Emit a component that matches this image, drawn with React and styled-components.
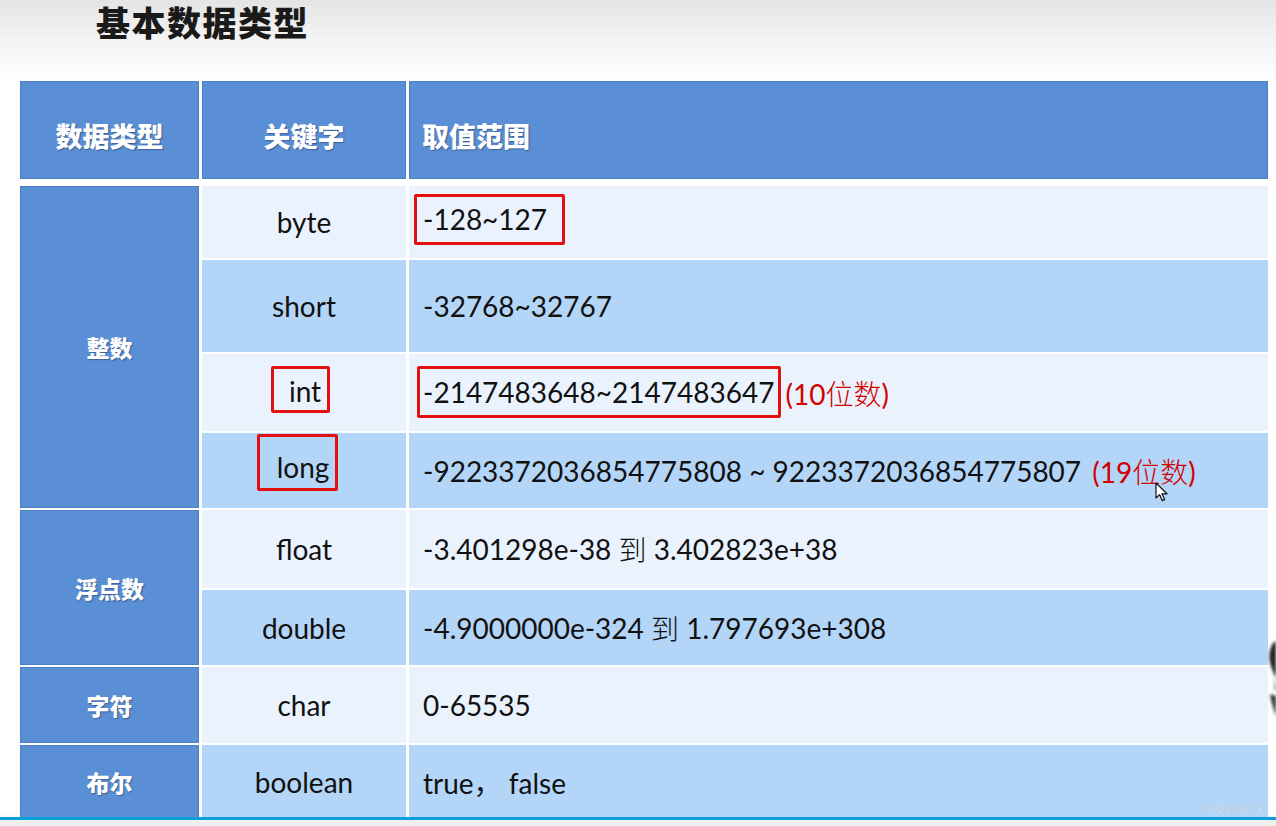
import React from "react";
import styled, { createGlobalStyle } from "styled-components";

const GlobalStyle = createGlobalStyle`
  html, body {
    margin: 0;
    padding: 0;
    background: #ffffff;
    overflow: hidden;
  }
  #root {
    width: 1276px;
    height: 826px;
  }
`;

const latin = `Lato, "Noto Sans CJK SC", sans-serif`;
const cjk = `"Noto Sans CJK SC", "Noto Sans", sans-serif`;

const LIGHT = "#eaf3fd";
const DARK = "#b3d5f8";
const BLUE = "#5a8ed5";

// rows are built inside the component so the styled parts below already exist
const buildRows = () => [
  {
    group: "整数",
    span: 4,
    key: "byte",
    h: 72,
    range: (
      <RedBox $pad="0 15px 0 6px" $h={51} $shift="-6px 0 0 -9px">
        -128~127
      </RedBox>
    ),
  },
  { key: "short", h: 92, range: "-32768~32767" },
  {
    key: "int",
    h: 77,
    keyBox: { pad: "2px 6px 0 15px", h: 47, shift: "-6px 0 0 -7px" },
    range: (
      <>
        <RedBox $pad="0 4px 0 3px" $h={52} $shift="-2px 0 0 -6px">
          -2147483648~2147483647
        </RedBox>
        <Note>(10<Han>位数</Han>)</Note>
      </>
    ),
  },
  {
    key: "long",
    h: 75,
    keyBox: { pad: "8px 6px 0 17px", h: 57, shift: "-16px 0 0 -13px" },
    range: (
      <>
        -9223372036854775808 ~ 9223372036854775807 <Note>(19<Han>位数</Han>)</Note>
      </>
    ),
  },
  { group: "浮点数", span: 2, key: "float", h: 78, range: <>-3.401298e-38 <Han>到</Han> 3.402823e+38</> },
  { key: "double", h: 75, range: <>-4.9000000e-324 <Han>到</Han> 1.797693e+308</> },
  { group: "字符", span: 1, key: "char", h: 76, range: "0-65535" },
  { group: "布尔", span: 1, key: "boolean", h: 74, range: "true， false" },
];

const App = () => {
  const rows = buildRows();
  let line = 1;
  const cells = [];
  rows.forEach((r, i) => {
    const tone = i % 2 === 0 ? LIGHT : DARK;
    if (r.group) {
      cells.push(
        <GroupCell key={r.key + "-g"} style={{ gridRow: `${line} / span ${r.span}` }}>
          {r.group}
        </GroupCell>
      );
    }
    const kb = r.keyBox;
    cells.push(
      <KeyCell key={r.key + "-k"} $bg={tone} style={{ gridRow: line }}>
        {kb ? (
          <RedBox $pad={kb.pad} $h={kb.h} $shift={kb.shift}>
            {r.key}
          </RedBox>
        ) : (
          r.key
        )}
      </KeyCell>
    );
    cells.push(
      <RangeCell key={r.key + "-r"} $bg={tone} style={{ gridRow: line }}>
        {r.range}
      </RangeCell>
    );
    line += 1;
  });

  return (
    <>
      <GlobalStyle />
      <Page>
        <TitleBar>
          <Title>基本数据类型</Title>
        </TitleBar>
        <Table>
          <HeadRow>
            <HeadCell $center>数据类型</HeadCell>
            <HeadCell $center>关键字</HeadCell>
            <HeadCell>取值范围</HeadCell>
          </HeadRow>
          <Body $rows={rows.map((r) => r.h + "px").join(" ")}>{cells}</Body>
        </Table>
        <Progress />
        <Watermark>CSDN @20_X</Watermark>
        <Cursor width="16" height="22" viewBox="0 0 16 22">
          <path d="M1 1 L1 16 L4.6 12.6 L7.2 18.6 L9.6 17.6 L7 11.8 L12 11.8 Z" fill="#fff" stroke="#111" strokeWidth="1.2" strokeLinejoin="round" />
        </Cursor>
        <EdgeBlob width="10" height="100" viewBox="0 0 10 100">
          <defs>
            <filter id="blur">
              <feGaussianBlur stdDeviation="1.6" />
            </filter>
          </defs>
          <g filter="url(#blur)">
            <path d="M8 6 C3 12 2 22 5 30 C7 36 9 40 10 42 L10 6 Z" fill="#222" />
            <path d="M4 58 C5 66 8 74 10 80 L10 60 Z" fill="#333" />
            <path d="M9 40 L10 56 L8 52 Z" fill="#777" />
          </g>
        </EdgeBlob>
      </Page>
    </>
  );
};

const Page = styled.div`
  position: relative;
  width: 1276px;
  height: 826px;
  background: linear-gradient(#ffffff 0, #ffffff 812px, #f0f0f0 822px);
  overflow: hidden;
`;

const TitleBar = styled.div`
  height: 81px;
  padding-left: 96px;
  box-sizing: border-box;
  background: linear-gradient(#e4e4e4 0%, #f4f4f4 50%, #ffffff 100%);
`;

const Title = styled.h1`
  margin: 0;
  font-family: ${cjk};
  font-weight: 900;
  font-size: 34px;
  line-height: 44px;
  letter-spacing: 1.5px;
  color: #1a1a1a;
`;

const Table = styled.div`
  margin: 0 8px 0 20px;
  width: 1248px;
`;

const HeadRow = styled.div`
  display: grid;
  grid-template-columns: 179px 204px 1fr;
  column-gap: 3px;
  height: 98px;
`;

const HeadCell = styled.div`
  background: ${BLUE};
  box-shadow: inset 0 0 0 1px #4d7fc4;
  display: flex;
  align-items: center;
  justify-content: ${(p) => (p.$center ? "center" : "flex-start")};
  padding: 10px 0 0 ${(p) => (p.$center ? "0" : "13px")};
  font-family: ${cjk};
  font-weight: 900;
  font-size: 27px;
  color: #ffffff;
  text-shadow: 1px 1px 1px rgba(30, 50, 90, 0.5);
`;

const Body = styled.div`
  display: grid;
  grid-template-columns: 179px 204px 1fr;
  grid-template-rows: ${(p) => p.$rows};
  gap: 2px 3px;
  margin-top: 7px;
`;

const GroupCell = styled.div`
  grid-column: 1;
  background: ${BLUE};
  box-shadow: inset 0 0 0 1px #4d7fc4;
  display: flex;
  align-items: center;
  justify-content: center;
  font-family: ${cjk};
  font-weight: 900;
  font-size: 23px;
  color: #ffffff;
  text-shadow: 1px 1px 1px rgba(30, 50, 90, 0.5);
`;

const KeyCell = styled.div`
  grid-column: 2;
  background: ${(p) => p.$bg};
  display: flex;
  align-items: center;
  justify-content: center;
  font-family: ${latin};
  font-size: 28px;
  color: #111111;
`;

const RangeCell = styled.div`
  grid-column: 3;
  background: ${(p) => p.$bg};
  display: flex;
  align-items: center;
  padding-left: 14px;
  white-space: pre;
  font-family: ${latin};
  font-size: 28px;
  color: #111111;
`;

const RedBox = styled.span`
  display: inline-flex;
  align-items: center;
  height: ${(p) => p.$h}px;
  margin: ${(p) => p.$shift};
  padding: ${(p) => p.$pad};
  border: 3px solid #e31010;
  border-radius: 2px;
  box-sizing: border-box;
`;

const Note = styled.span`
  color: #d40000;
  margin-left: 4px;
`;

const Han = styled.span`
  font-family: ${cjk};
  font-weight: 300;
`;

const Progress = styled.div`
  position: absolute;
  left: 0;
  top: 817px;
  width: 1276px;
  height: 3px;
  background: #0aa0dc;
`;

const Watermark = styled.div`
  position: absolute;
  right: 14px;
  top: 804px;
  font-family: "Liberation Sans", sans-serif;
  font-size: 9px;
  color: #e4ecf4;
  text-shadow: 0 0 1px #8aa0b8;
`;

const Cursor = styled.svg`
  position: absolute;
  left: 1155px;
  top: 482px;
`;

const EdgeBlob = styled.svg`
  position: absolute;
  right: 0;
  top: 636px;
`;

export default App;
